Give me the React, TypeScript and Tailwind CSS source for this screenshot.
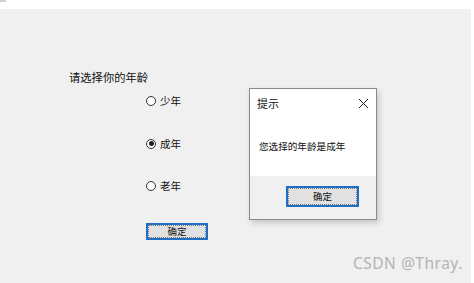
const AGES = [
  { label: '少年', checked: false },
  { label: '成年', checked: true },
  { label: '老年', checked: false },
]

const CJK = { fontFamily: '"Noto Sans CJK SC", "Microsoft YaHei", sans-serif' }

function Radio({ label, checked }: { label: string; checked: boolean }) {
  return (
    <div className="flex h-4 items-center">
      <span className="flex h-[10px] w-[10px] items-center justify-center rounded-full border border-[#333333] bg-white">
        {checked && <span className="h-[5px] w-[5px] rounded-full bg-[#222222]" />}
      </span>
      <span className="ml-[4px] text-[10.5px] leading-4 text-[#111111]">{label}</span>
    </div>
  )
}

function WinButton({ className }: { className: string }) {
  return (
    <div className={`flex items-center justify-center border-2 border-[#1f6fc4] bg-[#e1e1e1] ${className}`}>
      <div className="flex h-full w-full items-center justify-center border border-dotted border-[#777777]">
        <span className="text-[9.5px] leading-none text-[#111111]">确定</span>
      </div>
    </div>
  )
}

export default function App() {
  return (
    <div className="relative h-[283px] w-[474px] overflow-hidden bg-white" style={CJK}>
      <div className="absolute left-0 top-0 h-[2px] w-[6px] bg-[#cfcfcf]" />

      {/* Main window client area */}
      <div className="mr-[3px] mt-[9px] h-[274px] bg-[#f0f0f0] pl-[69px] pt-[60px]">
        <p className="text-[11.3px] leading-4 text-[#111111]">请选择你的年龄</p>
        <div className="ml-[77px] mt-[8px] flex flex-col gap-[26.5px]">
          {AGES.map((age) => (
            <Radio key={age.label} label={age.label} checked={age.checked} />
          ))}
        </div>
        <WinButton className="ml-[77px] mt-[29px] h-[17px] w-[62px]" />
      </div>

      {/* Message box */}
      <div className="absolute left-[249px] top-[88px] flex h-[132px] w-[128px] flex-col border border-[#8a8a8a] bg-white shadow-[2px_3px_6px_rgba(0,0,0,0.18)]">
        <div className="flex h-[28px] items-center justify-between pl-[7px] pr-[5px]">
          <span className="text-[11px] leading-none text-[#111111]">提示</span>
          <svg width="11" height="11" viewBox="0 0 11 11" className="mr-[2px]">
            <path d="M1 1 L10 10 M10 1 L1 10" stroke="#222222" strokeWidth="1" />
          </svg>
        </div>
        <div className="flex flex-1 items-center pl-[9px]">
          <span className="text-[9.6px] leading-none text-[#111111]">您选择的年龄是成年</span>
        </div>
        <div className="flex h-[43px] items-start bg-[#f0f0f0] pl-[36px] pt-[10px]">
          <WinButton className="h-[21px] w-[73px]" />
        </div>
      </div>

      <span
        className="absolute left-[353px] top-[256px] text-[15.5px] leading-none tracking-[0.5px] text-[#b3b3b3]"
        style={{ fontFamily: '"Noto Sans", "Open Sans", sans-serif' }}
      >
        CSDN @Thray.
      </span>
    </div>
  )
}
